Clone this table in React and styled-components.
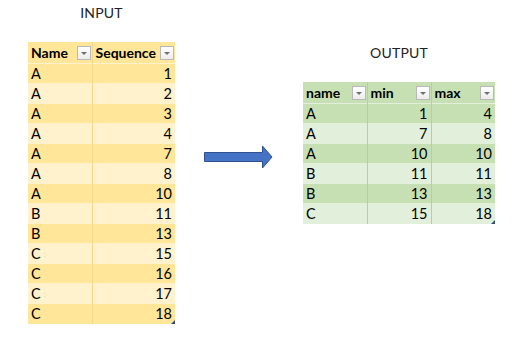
import React from "react";
import styled, { createGlobalStyle } from "styled-components";

const GlobalStyle = createGlobalStyle`
  html, body {
    margin: 0;
    padding: 0;
    background: #ffffff;
  }
  body {
    font-family: Lato, "Open Sans", "Liberation Sans", sans-serif;
  }
`;

const themes = {
  orange: { header: "#FFE699", band1: "#FFE699", band2: "#FFF2CC", line: "#FFF2CC", col: "#F3D98A" },
  green: { header: "#C6E0B4", band1: "#C6E0B4", band2: "#E2EFDA", line: "#E2EFDA", col: "#B4CFA1" },
};

const inputRows = [
  ["A", 1], ["A", 2], ["A", 3], ["A", 4], ["A", 7], ["A", 8], ["A", 10],
  ["B", 11], ["B", 13], ["C", 15], ["C", 16], ["C", 17], ["C", 18],
];

const outputRows = [
  ["A", 1, 4], ["A", 7, 8], ["A", 10, 10], ["B", 11, 11], ["B", 13, 13], ["C", 15, 18],
];

const DataTable = ({ columns, widths, rows, theme }) => {
  const t = themes[theme];
  return (
    <TableWrap>
      <StTable>
        <colgroup>
          {widths.map((w, i) => (
            <col key={i} style={{ width: w }} />
          ))}
        </colgroup>
        <thead>
          <tr>
            {columns.map((c) => (
              <HeadCell key={c} bg={t.header} col={t.col}>
                <HeadInner>
                  <span>{c}</span>
                  <FilterButton>
                    <Caret />
                  </FilterButton>
                </HeadInner>
              </HeadCell>
            ))}
          </tr>
        </thead>
        <tbody>
          {rows.map((r, i) => (
            <tr key={i}>
              {r.map((v, j) => (
                <Cell
                  key={j}
                  numeric={typeof v === "number"}
                  bg={i % 2 === 0 ? t.band1 : t.band2}
                  line={t.line}
                  col={t.col}
                >
                  {v}
                </Cell>
              ))}
            </tr>
          ))}
        </tbody>
      </StTable>
      <ResizeHandle />
    </TableWrap>
  );
};

const App = () => {
  return (
    <>
      <GlobalStyle />
      <Page>
        <Section>
          <Label>INPUT</Label>
          <DataTable
            columns={["Name", "Sequence"]}
            widths={[64, 83]}
            rows={inputRows}
            theme="orange"
          />
        </Section>
        <ArrowBox>
          <svg width="69" height="24" viewBox="0 0 69 24">
            <path
              d="M0.5 7.5 H58.5 V1 L68 12 L58.5 23 V16.5 H0.5 Z"
              fill="#4472C4"
              stroke="#2F528F"
              strokeWidth="1"
            />
          </svg>
        </ArrowBox>
        <Section offset={40}>
          <Label>OUTPUT</Label>
          <DataTable
            columns={["name", "min", "max"]}
            widths={[64, 64, 64]}
            rows={outputRows}
            theme="green"
          />
        </Section>
      </Page>
    </>
  );
};

export default App;

const Page = styled.div`
  display: flex;
  align-items: flex-start;
  padding: 3px 0 0 28px;
  width: 532px;
  height: 347px;
  box-sizing: border-box;
`;

const Section = styled.div`
  display: flex;
  flex-direction: column;
  margin-top: ${({ offset }) => offset || 0}px;
`;

const Label = styled.div`
  text-align: center;
  font-size: 14px;
  line-height: 20px;
  color: #222;
  margin-bottom: 19px;
  letter-spacing: 0.2px;
`;

const ArrowBox = styled.div`
  display: flex;
  margin: 142px 30px 0 29px;
  height: 24px;
`;

const TableWrap = styled.div`
  position: relative;
`;

const StTable = styled.table`
  border-collapse: collapse;
  table-layout: fixed;
  font-size: 14.5px;
  color: #000;
`;

const HeadCell = styled.th`
  background: ${({ bg }) => bg};
  height: 21px;
  padding: 0 1px 0 3px;
  text-align: left;
  font-size: 14px;
  font-weight: 700;
  border-left: 1px solid ${({ col }) => col};
  box-sizing: border-box;
  &:first-child {
    border-left: none;
  }
`;

const HeadInner = styled.div`
  display: flex;
  align-items: center;
  justify-content: space-between;
  line-height: 21px;
`;

const FilterButton = styled.span`
  display: flex;
  align-items: center;
  justify-content: center;
  width: 14px;
  height: 14px;
  box-sizing: border-box;
  border: 1px solid #b9b9b9;
  background: linear-gradient(#ffffff, #ececec);
`;

const Caret = styled.span`
  width: 0;
  height: 0;
  border-left: 3px solid transparent;
  border-right: 3px solid transparent;
  border-top: 3px solid #6e6e6e;
  margin-top: 1px;
`;

const Cell = styled.td`
  background: ${({ bg }) => bg};
  height: 20px;
  padding: 0 3px;
  line-height: 19px;
  text-align: ${({ numeric }) => (numeric ? "right" : "left")};
  border-top: 1px solid ${({ line }) => line};
  border-left: 1px solid ${({ col }) => col};
  box-sizing: border-box;
  &:first-child {
    border-left: none;
  }
`;

const ResizeHandle = styled.div`
  position: absolute;
  right: 0;
  bottom: 0;
  width: 0;
  height: 0;
  border-left: 4px solid transparent;
  border-bottom: 4px solid #2F4F7F;
`;
